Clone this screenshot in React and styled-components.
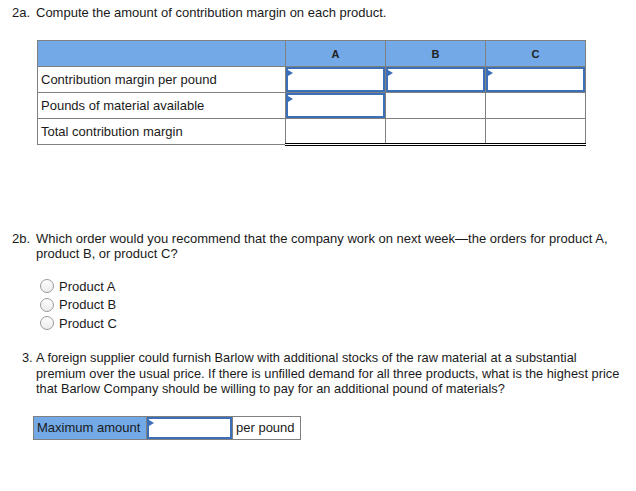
import styled, { createGlobalStyle } from "styled-components";

const GlobalStyle = createGlobalStyle`
  html, body {
    margin: 0;
    background: #fff;
  }
  body {
    font-family: "Liberation Sans", Arial, sans-serif;
    color: #1a1a1a;
  }
`;

const StyledPage = styled.main`
  width: 636px;
  height: 491px;
  padding: 5px 0 0 12px;
  box-sizing: border-box;
  overflow: hidden;
`;

const Question = styled.div`
  display: flex;
  font-size: ${(p) => p.$size || 13}px;
  line-height: ${(p) => p.$line || 15}px;
  margin-top: ${(p) => p.$top || 0}px;
  .num {
    width: 24px;
    padding-left: ${(p) => p.$numPad || 0}px;
    box-sizing: border-box;
    flex: none;
  }
  .text {
    flex: 1;
    padding-right: ${(p) => p.$right || 10}px;
  }
`;

const Grid = styled.table`
  border-collapse: collapse;
  margin: 20px 0 0 25px;
  font-size: 13px;
  td,
  th {
    border: 1px solid #808080;
    padding: 0;
    height: 26px;
    box-sizing: border-box;
  }
  th {
    background: #72a9e6;
    font-size: 11px;
    font-weight: bold;
    color: #222;
  }
  .label {
    width: 248px;
    padding-left: 3px;
    text-align: left;
  }
  .val {
    width: 100px;
    position: relative;
  }
  tr.total td.val {
    border-top: 1px solid #000;
    border-bottom: 3px double #000;
  }
`;

const Entry = styled.div`
  position: absolute;
  inset: 0;
  border: 2px solid #3b70b9;
  &::before {
    content: "";
    position: absolute;
    left: 0;
    top: 1px;
    border-left: 5px solid #3b70b9;
    border-top: 3px solid transparent;
    border-bottom: 3px solid transparent;
  }
`;

const Options = styled.div`
  display: flex;
  flex-direction: column;
  gap: 4.5px;
  margin: 18px 0 0 28px;
`;

const Option = styled.label`
  display: flex;
  align-items: center;
  gap: 5px;
  font-size: 13px;
  height: 14px;
`;

const Radio = styled.span`
  width: 12px;
  height: 12px;
  border-radius: 50%;
  border: 1px solid #9a9a9a;
  background: linear-gradient(#fdfdfd, #ececec);
`;

const AmountRow = styled.div`
  display: flex;
  margin: 19px 0 0 21px;
  height: 24px;
  font-size: 13px;
  border: 1px solid #808080;
  width: fit-content;
  box-sizing: border-box;
`;

const AmountLabel = styled.div`
  background: #72a9e6;
  width: 113px;
  padding-left: 3px;
  display: flex;
  align-items: center;
  border-right: 1px solid #808080;
  box-sizing: border-box;
`;

const AmountInput = styled.div`
  width: 85px;
  position: relative;
  border-right: 1px solid #808080;
`;

const AmountUnit = styled.div`
  width: 67px;
  padding-left: 3px;
  display: flex;
  align-items: center;
  box-sizing: border-box;
`;

const rows = [
  { label: "Contribution margin per pound", inputs: [true, true, true] },
  { label: "Pounds of material available", inputs: [true, false, false] },
  { label: "Total contribution margin", inputs: [false, false, false], total: true },
];

function App() {
  return (
    <StyledPage>
      <GlobalStyle />
      <Question>
        <span className="num">2a.</span>
        <span className="text">Compute the amount of contribution margin on each product.</span>
      </Question>

      <Grid>
        <thead>
          <tr>
            <th className="label"></th>
            <th className="val">A</th>
            <th className="val">B</th>
            <th className="val">C</th>
          </tr>
        </thead>
        <tbody>
          {rows.map((row) => (
            <tr key={row.label} className={row.total ? "total" : ""}>
              <td className="label">{row.label}</td>
              {row.inputs.map((on, i) => (
                <td className="val" key={i}>
                  {on && <Entry />}
                </td>
              ))}
            </tr>
          ))}
        </tbody>
      </Grid>

      <Question $top={85}>
        <span className="num">2b.</span>
        <span className="text">
          Which order would you recommend that the company work on next week—the orders for product A,
          product B, or product C?
        </span>
      </Question>

      <Options>
        {["Product A", "Product B", "Product C"].map((p) => (
          <Option key={p}>
            <Radio />
            {p}
          </Option>
        ))}
      </Options>

      <Question $top={20} $size={12.8} $line={15.5} $numPad={10} $right={10}>
        <span className="num">3.</span>
        <span className="text">
          A foreign supplier could furnish Barlow with additional stocks of the raw material at a substantial
          premium over the usual price. If there is unfilled demand for all three products, what is the highest
          price that Barlow Company should be willing to pay for an additional pound of materials?
        </span>
      </Question>

      <AmountRow>
        <AmountLabel>Maximum amount</AmountLabel>
        <AmountInput>
          <Entry />
        </AmountInput>
        <AmountUnit>per pound</AmountUnit>
      </AmountRow>
    </StyledPage>
  );
}

export default App;
